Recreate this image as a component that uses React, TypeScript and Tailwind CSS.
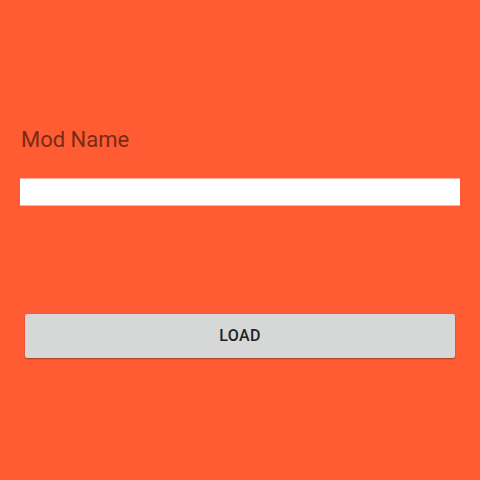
export default function App() {
  return (
    <div
      className="w-[480px] h-[480px] bg-[#ff5c33] flex flex-col"
      style={{ fontFamily: "Roboto, 'Liberation Sans', sans-serif" }}
    >
      <div className="pt-[125px] pl-[21px] text-[22px] leading-[30px] text-[#7a2a16]">
        Mod Name
      </div>
      <div className="mx-[20px] mt-[23px] h-[28px] bg-white border-y border-[#ffb29e]" />
      <div className="mx-[25px] mt-[108px] h-[44px] rounded-[2px] bg-[#d6d7d7] shadow-[0_1px_1.5px_rgba(0,0,0,0.35)] flex items-center justify-center">
        <span className="text-[16px] font-medium tracking-[0.4px] text-[#222222]">LOAD</span>
      </div>
    </div>
  );
}
